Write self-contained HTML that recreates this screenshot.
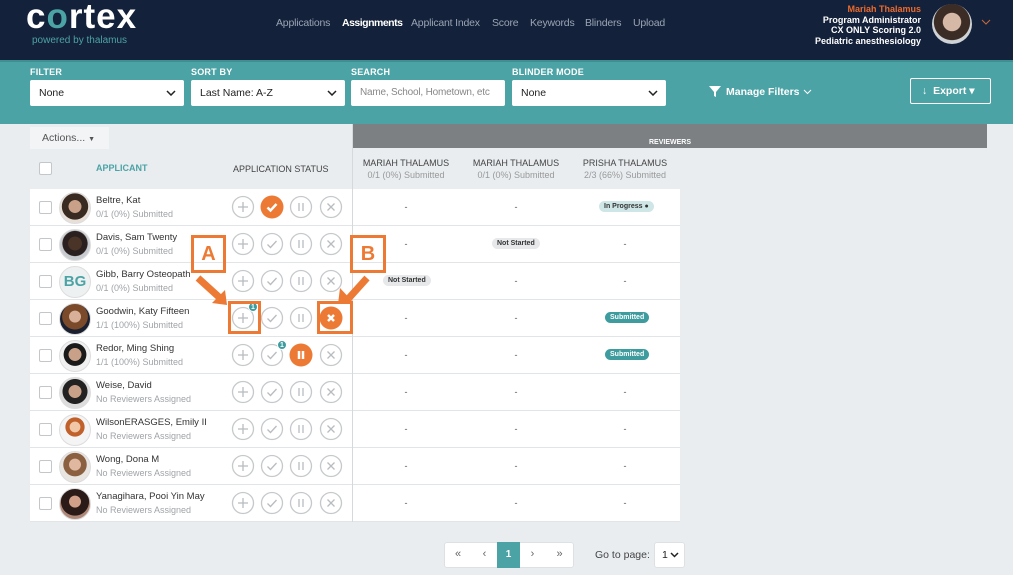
<!DOCTYPE html>
<html><head><meta charset="utf-8"><style>
*{box-sizing:border-box;margin:0;padding:0}
body{width:1013px;height:575px;overflow:hidden;background:#e9edf0;font-family:"Liberation Sans",sans-serif;position:relative}
.hdr{position:absolute;left:0;top:0;width:1013px;height:60px;background:#13213a}
.nav{position:absolute;top:17px;font-size:10.5px;color:#9aa4b3;white-space:nowrap;letter-spacing:-0.2px}
.bar{position:absolute;left:0;top:60px;width:1013px;height:64px;background:#4ca3a5;border-top:2px solid #3f8f92}
.lbl{position:absolute;top:67px;font-size:9px;font-weight:bold;color:#fff;letter-spacing:.2px}
.sel{position:absolute;top:80px;height:26px;background:#fff;border-radius:2px;font-size:10.5px;color:#222;padding:7px 9px;white-space:nowrap;overflow:hidden}
.sel svg{position:absolute;right:8px;top:10px}
.a{position:absolute}
.row{position:absolute;left:30px;width:650px;height:37px;background:#fff;border-bottom:1px solid #e1e5e8}
.cb{position:absolute;left:9px;top:12px;width:13px;height:13px;border:1px solid #c3c7ca;border-radius:2px;background:#fff}
.av{position:absolute;left:29px;top:3px;width:32px;height:32px;border-radius:50%;background:#8a7060;border:1px solid #ddd}
.nm{position:absolute;left:66px;top:6px;font-size:9.5px;color:#333}
.sb{position:absolute;left:66px;top:20px;font-size:9px;color:#a0a4a8}
.ic{position:absolute;top:6px}
.sep{position:absolute;left:322px;top:0;width:1px;height:37px;background:#d5d9dc}
.d{position:absolute;top:13px;font-size:9px;color:#555;width:20px;text-align:center}
.pill{position:absolute;top:12px;font-size:7px;font-weight:bold;padding:2px 5px;border-radius:7px;background:#e6e8ea;color:#333}
.ob{position:absolute;border:3px solid #ec7a35}
.ol{position:absolute;color:#ec7a35;font-weight:bold;font-size:20px;text-align:center}
</style></head><body>
<div class="hdr"></div>
<div class="a" style="left:26px;top:-1px;font-size:35px;line-height:1;font-weight:bold;color:#fff;letter-spacing:1px">c<span style="color:#4ca3a5">o</span>rtex</div>
<div class="a" style="left:32px;top:35px;font-size:10px;color:#4ca3a5">powered by thalamus</div>
<div class="nav" style="left:276px">Applications</div>
<div class="nav" style="left:342px;color:#fff;font-weight:bold;letter-spacing:-0.5px">Assignments</div>
<div class="nav" style="left:411px">Applicant Index</div>
<div class="nav" style="left:492px">Score</div>
<div class="nav" style="left:530px">Keywords</div>
<div class="nav" style="left:585px">Blinders</div>
<div class="nav" style="left:633px">Upload</div>
<div class="a" style="right:92px;top:4px;text-align:right;font-size:9px;line-height:10.5px;color:#fff;font-weight:bold"><span style="color:#ec6a2c">Mariah Thalamus</span><br>Program Administrator<br>CX ONLY Scoring 2.0<br>Pediatric anesthesiology</div>
<div class="a" style="left:932px;top:4px;width:40px;height:40px;border-radius:50%;background:radial-gradient(circle at 50% 45%,#d6b8a6 0 30%,#3b2c26 32% 60%,#cfd3d6 62%)"></div>
<svg class="a" style="left:981px;top:19px" width="10" height="6"><path d="M1 1l4 4 4-4" stroke="#c76a3c" fill="none"/></svg>

<div class="bar"></div>
<div class="lbl" style="left:30px">FILTER</div>
<div class="lbl" style="left:191px">SORT BY</div>
<div class="lbl" style="left:351px">SEARCH</div>
<div class="lbl" style="left:512px">BLINDER MODE</div>
<div class="sel" style="left:30px;width:154px">None<svg width="10" height="6"><path d="M1 1l4 4 4-4" stroke="#222" stroke-width="1.5" fill="none"/></svg></div>
<div class="sel" style="left:191px;width:154px">Last Name: A-Z<svg width="10" height="6"><path d="M1 1l4 4 4-4" stroke="#222" stroke-width="1.5" fill="none"/></svg></div>
<div class="sel" style="left:351px;width:154px;color:#888;font-size:10px;letter-spacing:-0.2px">Name, School, Hometown, etc</div>
<div class="sel" style="left:512px;width:154px">None<svg width="10" height="6"><path d="M1 1l4 4 4-4" stroke="#222" stroke-width="1.5" fill="none"/></svg></div>
<svg class="a" style="left:709px;top:86px" width="12" height="11"><path d="M0 0h12L7 6v5L5 10V6z" fill="#fff"/></svg>
<div class="a" style="left:726px;top:86px;font-size:10.5px;font-weight:bold;color:#fff">Manage Filters</div>
<svg class="a" style="left:803px;top:89px" width="9" height="6"><path d="M1 1l3.5 3.5L8 1" stroke="#fff" fill="none"/></svg>
<div class="a" style="left:910px;top:78px;width:81px;height:26px;border:1px solid #fff;border-radius:2px"></div>
<div class="a" style="left:922px;top:85px;font-size:10.5px;font-weight:bold;color:#fff">↓ &nbsp;Export ▾</div>

<div class="a" style="left:30px;top:127px;width:79px;height:22px;background:#f2f4f5;font-size:10.5px;color:#555;padding:5px 12px">Actions... <span style="font-size:7px">▼</span></div>
<div class="a" style="left:353px;top:124px;width:634px;height:24px;background:#7c8083"></div>
<div class="a" style="left:649px;top:139px;font-size:7px;font-weight:bold;color:#fff">REVIEWERS</div>
<div class="a" style="left:352px;top:124px;width:1px;height:398px;background:#d5d9dc"></div>
<div class="a" style="left:39px;top:162px;width:13px;height:13px;border:1px solid #c3c7ca;border-radius:2px;background:#fff"></div>
<div class="a" style="left:96px;top:163px;font-size:9px;font-weight:bold;color:#4ca3a5">APPLICANT</div>
<div class="a" style="left:233px;top:164px;font-size:9px;color:#444">APPLICATION STATUS</div>
<div class="a" style="left:356px;top:157px;width:100px;text-align:center;font-size:9px;color:#444;line-height:12px">MARIAH THALAMUS<br><span style="color:#999">0/1 (0%) Submitted</span></div>
<div class="a" style="left:466px;top:157px;width:100px;text-align:center;font-size:9px;color:#444;line-height:12px">MARIAH THALAMUS<br><span style="color:#999">0/1 (0%) Submitted</span></div>
<div class="a" style="left:570px;top:157px;width:110px;text-align:center;font-size:9px;color:#444;line-height:12px">PRISHA THALAMUS<br><span style="color:#999">2/3 (66%) Submitted</span></div>

<svg width="0" height="0" style="position:absolute"><defs>
<g id="c"><circle cx="12" cy="12" r="10.5" fill="#fff" stroke="#c5c9cc" stroke-width="1.3"/></g>
<g id="p"><use href="#c"/><path d="M12 7v10M7 12h10" stroke="#b8bcc0" stroke-width="1.3"/></g>
<g id="k"><use href="#c"/><path d="M7.5 12.5l3 3 6-6.5" stroke="#b8bcc0" stroke-width="1.3" fill="none"/></g>
<g id="h"><use href="#c"/><path d="M10 8v8M14 8v8" stroke="#b8bcc0" stroke-width="1.3"/></g>
<g id="x"><use href="#c"/><path d="M8.5 8.5l7 7M15.5 8.5l-7 7" stroke="#b8bcc0" stroke-width="1.3"/></g>
<g id="K"><circle cx="12" cy="12" r="11.5" fill="#ec7a35"/><path d="M7.5 12.5l3 3 6-6.5" stroke="#fff" stroke-width="2.5" fill="none"/></g>
<g id="H"><circle cx="12" cy="12" r="11.5" fill="#ec7a35"/><path d="M10 8v8M14 8v8" stroke="#fff" stroke-width="2.5"/></g>
<g id="X"><circle cx="12" cy="12" r="11.5" fill="#ec7a35"/><path d="M9 9l6 6M15 9l-6 6" stroke="#fff" stroke-width="2.5"/></g>
</defs></svg>

<div class="row" style="top:189px"><div class="cb"></div><div class="av" style="background:radial-gradient(circle at 50% 45%,#c9a088 0 28%,#3a2b22 30% 58%,#e8e0d8 60%)"></div><div class="nm">Beltre, Kat</div><div class="sb">0/1 (0%) Submitted</div>
<svg class="ic" style="left:201px" width="24" height="24"><use href="#p"/></svg><svg class="ic" style="left:230px" width="24" height="24"><use href="#K"/></svg><svg class="ic" style="left:259px" width="24" height="24"><use href="#h"/></svg><svg class="ic" style="left:289px" width="24" height="24"><use href="#x"/></svg>
<div class="sep"></div><div class="d" style="left:366px">-</div><div class="d" style="left:476px">-</div><div class="pill" style="left:569px;background:#cfe6e6">In Progress ●</div></div>

<div class="row" style="top:226px"><div class="cb"></div><div class="av" style="background:radial-gradient(circle at 50% 45%,#4a3428 0 30%,#2a2020 32% 55%,#c8ccd0 58%)"></div><div class="nm">Davis, Sam Twenty</div><div class="sb">0/1 (0%) Submitted</div>
<svg class="ic" style="left:201px" width="24" height="24"><use href="#p"/></svg><svg class="ic" style="left:230px" width="24" height="24"><use href="#k"/></svg><svg class="ic" style="left:259px" width="24" height="24"><use href="#h"/></svg><svg class="ic" style="left:289px" width="24" height="24"><use href="#x"/></svg>
<div class="sep"></div><div class="d" style="left:366px">-</div><div class="pill" style="left:462px">Not Started</div><div class="d" style="left:585px">-</div></div>

<div class="row" style="top:263px"><div class="cb"></div><div class="av" style="background:#eef1f2;color:#4ca3a5;font-size:15px;font-weight:bold;text-align:center;line-height:30px">BG</div><div class="nm">Gibb, Barry Osteopath</div><div class="sb">0/1 (0%) Submitted</div>
<svg class="ic" style="left:201px" width="24" height="24"><use href="#p"/></svg><svg class="ic" style="left:230px" width="24" height="24"><use href="#k"/></svg><svg class="ic" style="left:259px" width="24" height="24"><use href="#h"/></svg><svg class="ic" style="left:289px" width="24" height="24"><use href="#x"/></svg>
<div class="sep"></div><div class="pill" style="left:353px">Not Started</div><div class="d" style="left:476px">-</div><div class="d" style="left:585px">-</div></div>

<div class="row" style="top:300px"><div class="cb"></div><div class="av" style="background:radial-gradient(circle at 50% 42%,#d8b09a 0 25%,#7a4a2a 27% 55%,#1a2030 57% 80%,#e8e8e8 82%)"></div><div class="nm">Goodwin, Katy Fifteen</div><div class="sb">1/1 (100%) Submitted</div>
<svg class="ic" style="left:201px" width="24" height="24"><use href="#p"/></svg><svg class="ic" style="left:230px" width="24" height="24"><use href="#k"/></svg><svg class="ic" style="left:259px" width="24" height="24"><use href="#h"/></svg><svg class="ic" style="left:289px" width="24" height="24"><use href="#X"/></svg>
<div class="sep"></div><div class="d" style="left:366px">-</div><div class="d" style="left:476px">-</div><div class="pill" style="left:575px;background:#3e9c9f;color:#fff">Submitted</div></div>

<div class="row" style="top:337px"><div class="cb"></div><div class="av" style="background:radial-gradient(circle at 50% 45%,#c9a088 0 28%,#1a1a1a 30% 50%,#f0f0f0 52%)"></div><div class="nm">Redor, Ming Shing</div><div class="sb">1/1 (100%) Submitted</div>
<svg class="ic" style="left:201px" width="24" height="24"><use href="#p"/></svg><svg class="ic" style="left:230px" width="24" height="24"><use href="#k"/></svg><svg class="ic" style="left:259px" width="24" height="24"><use href="#H"/></svg><svg class="ic" style="left:289px" width="24" height="24"><use href="#x"/></svg>
<div class="sep"></div><div class="d" style="left:366px">-</div><div class="d" style="left:476px">-</div><div class="pill" style="left:575px;background:#3e9c9f;color:#fff">Submitted</div></div>

<div class="row" style="top:374px"><div class="cb"></div><div class="av" style="background:radial-gradient(circle at 50% 45%,#c9a088 0 28%,#222 30% 55%,#ddd 57%)"></div><div class="nm">Weise, David</div><div class="sb">No Reviewers Assigned</div>
<svg class="ic" style="left:201px" width="24" height="24"><use href="#p"/></svg><svg class="ic" style="left:230px" width="24" height="24"><use href="#k"/></svg><svg class="ic" style="left:259px" width="24" height="24"><use href="#h"/></svg><svg class="ic" style="left:289px" width="24" height="24"><use href="#x"/></svg>
<div class="sep"></div><div class="d" style="left:366px">-</div><div class="d" style="left:476px">-</div><div class="d" style="left:585px">-</div></div>

<div class="row" style="top:411px"><div class="cb"></div><div class="av" style="background:radial-gradient(circle at 50% 40%,#f0c8a8 0 22%,#c0602a 24% 40%,#f4f4f4 42%)"></div><div class="nm">WilsonERASGES, Emily II</div><div class="sb">No Reviewers Assigned</div>
<svg class="ic" style="left:201px" width="24" height="24"><use href="#p"/></svg><svg class="ic" style="left:230px" width="24" height="24"><use href="#k"/></svg><svg class="ic" style="left:259px" width="24" height="24"><use href="#h"/></svg><svg class="ic" style="left:289px" width="24" height="24"><use href="#x"/></svg>
<div class="sep"></div><div class="d" style="left:366px">-</div><div class="d" style="left:476px">-</div><div class="d" style="left:585px">-</div></div>

<div class="row" style="top:448px"><div class="cb"></div><div class="av" style="background:radial-gradient(circle at 50% 42%,#e0b8a0 0 25%,#8a6040 27% 50%,#e8e4e0 52%)"></div><div class="nm">Wong, Dona M</div><div class="sb">No Reviewers Assigned</div>
<svg class="ic" style="left:201px" width="24" height="24"><use href="#p"/></svg><svg class="ic" style="left:230px" width="24" height="24"><use href="#k"/></svg><svg class="ic" style="left:259px" width="24" height="24"><use href="#h"/></svg><svg class="ic" style="left:289px" width="24" height="24"><use href="#x"/></svg>
<div class="sep"></div><div class="d" style="left:366px">-</div><div class="d" style="left:476px">-</div><div class="d" style="left:585px">-</div></div>

<div class="row" style="top:485px"><div class="cb"></div><div class="av" style="background:radial-gradient(circle at 50% 42%,#d0a088 0 25%,#2a1a18 27% 60%,#b08878 62%)"></div><div class="nm">Yanagihara, Pooi Yin May</div><div class="sb">No Reviewers Assigned</div>
<svg class="ic" style="left:201px" width="24" height="24"><use href="#p"/></svg><svg class="ic" style="left:230px" width="24" height="24"><use href="#k"/></svg><svg class="ic" style="left:259px" width="24" height="24"><use href="#h"/></svg><svg class="ic" style="left:289px" width="24" height="24"><use href="#x"/></svg>
<div class="sep"></div><div class="d" style="left:366px">-</div><div class="d" style="left:476px">-</div><div class="d" style="left:585px">-</div></div>

<div class="a" style="left:248px;top:302px;width:10px;height:10px;border-radius:50%;background:#3e9c9f;color:#fff;font-size:7px;font-weight:bold;text-align:center;line-height:10px;border:1px solid #fff">1</div>
<div class="a" style="left:277px;top:340px;width:10px;height:10px;border-radius:50%;background:#3e9c9f;color:#fff;font-size:7px;font-weight:bold;text-align:center;line-height:10px;border:1px solid #fff">1</div>

<div class="ob" style="left:191px;top:235px;width:35px;height:38px"></div>
<div class="ol" style="left:191px;top:243px;width:35px">A</div>
<div class="ob" style="left:350px;top:235px;width:36px;height:38px"></div>
<div class="ol" style="left:350px;top:243px;width:36px">B</div>
<div class="ob" style="left:228px;top:301px;width:33px;height:33px"></div>
<div class="ob" style="left:317px;top:301px;width:36px;height:33px"></div>
<svg class="a" style="left:190px;top:272px" width="200" height="40">
<path d="M8 6l22 20" stroke="#ec7a35" stroke-width="7"/><path d="M22 31l15 2-2-15z" fill="#ec7a35"/>
<path d="M177 6l-18 20" stroke="#ec7a35" stroke-width="7"/><path d="M150 16l-2 16 15-2z" fill="#ec7a35"/>
</svg>

<div class="a" style="left:444px;top:542px;width:130px;height:26px;background:#fff;border:1px solid #dde1e4;border-radius:3px"></div>
<div class="a" style="left:497px;top:542px;width:23px;height:26px;background:#4ca3a5;color:#fff;font-size:10px;text-align:center;line-height:26px;font-weight:bold">1</div>
<div class="a" style="left:444px;top:548px;width:28px;text-align:center;font-size:11px;color:#666">«</div>
<div class="a" style="left:472px;top:548px;width:25px;text-align:center;font-size:11px;color:#666">‹</div>
<div class="a" style="left:520px;top:548px;width:25px;text-align:center;font-size:11px;color:#666">›</div>
<div class="a" style="left:545px;top:548px;width:29px;text-align:center;font-size:11px;color:#666">»</div>
<div class="a" style="left:595px;top:549px;font-size:10.5px;color:#444">Go to page:</div>
<div class="a" style="left:654px;top:542px;width:31px;height:26px;background:#fff;border:1px solid #dde1e4;border-radius:3px;font-size:10.5px;color:#222;padding:6px 0 0 7px">1<svg style="margin-left:2px" width="9" height="6"><path d="M1 1l3.5 3.5L8 1" stroke="#222" stroke-width="1.5" fill="none"/></svg></div>
</body></html>
